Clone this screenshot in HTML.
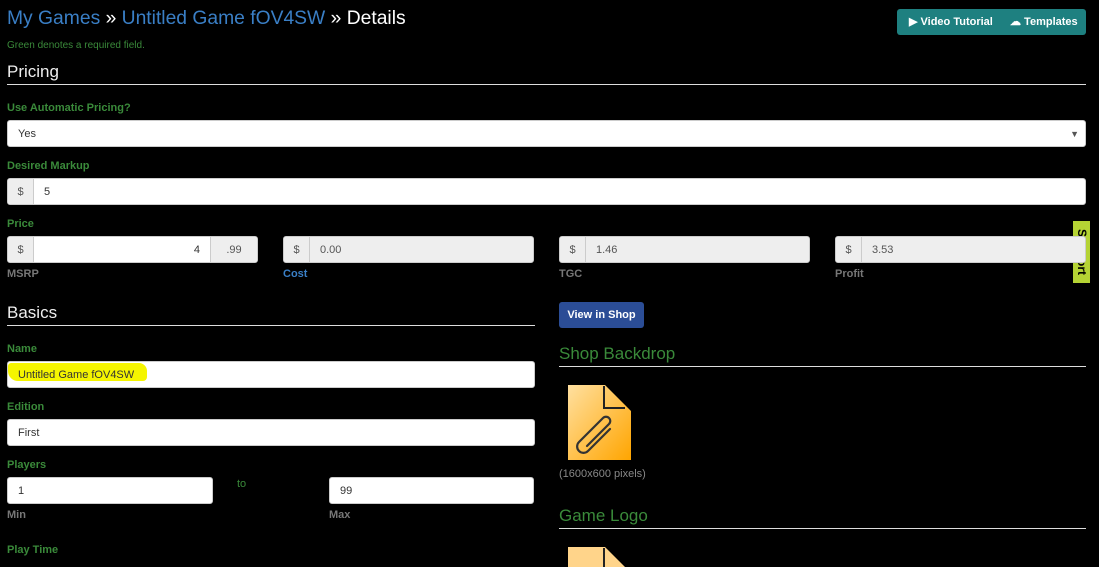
<!DOCTYPE html>
<html><head><meta charset="utf-8"><style>
*{box-sizing:border-box;margin:0;padding:0}
body{width:1099px;height:562px;background:#000;font-family:"Liberation Sans",Arial,sans-serif;position:relative;overflow:hidden}
.a{position:absolute}
.lbl{position:absolute;font-size:11px;font-weight:bold;color:#3a8a3a}
.sub{position:absolute;font-size:11px;font-weight:bold;color:#777}
.inp{position:absolute;background:#fff;border:1px solid #ccc;border-radius:3px;height:27px;font-size:11px;color:#333;padding:8px 10px;line-height:11px}
.grp{position:absolute;height:27px;display:flex;border-radius:3px;overflow:hidden;border:1px solid #ccc;font-size:11px;color:#555}
.ad{background:#eee;width:26px;text-align:center;line-height:26px;border-right:1px solid #ccc;flex:none}
.f{flex:1;line-height:26px;padding:0 10px}
.h{position:absolute;font-size:17px;color:#eee}
.line{position:absolute;height:1px;background:#ddd}
</style></head><body>
<div class="a" style="left:7px;top:8px;font-size:19.3px;color:#3a7fc6">My Games <span style="color:#fff">»</span> Untitled Game fOV4SW <span style="color:#fff">» Details</span></div>
<div class="a" style="left:7px;top:40px;font-size:10px;color:#3a8a3a">Green denotes a required field.</div>
<div class="a" style="left:897px;top:9px;width:189px;height:26px;background:#1e8080;border-radius:3px;color:#fff;font-size:11px;font-weight:bold;line-height:26px">
<span style="position:absolute;left:12px">▶ Video Tutorial</span><span style="position:absolute;left:113px">☁ Templates</span></div>
<div class="h" style="left:7px;top:62px">Pricing</div>
<div class="line" style="left:7px;top:84px;width:1079px"></div>
<div class="lbl" style="top:102px;left:7px">Use Automatic Pricing?</div>
<div class="inp" style="left:7px;top:120px;width:1079px">Yes<span style="position:absolute;right:6px;top:8px;font-size:9px;color:#555">▼</span></div>
<div class="lbl" style="top:160px;left:7px">Desired Markup</div>
<div class="grp" style="left:7px;top:178px;width:1079px;background:#fff"><div class="ad">$</div><div class="f" style="color:#333">5</div></div>
<div class="lbl" style="top:218px;left:7px">Price</div>
<div class="grp" style="left:7px;top:236px;width:251px;background:#fff"><div class="ad">$</div><div class="f" style="text-align:right;color:#333">4</div><div class="ad" style="width:47px;border-right:0;border-left:1px solid #ccc">.99</div></div>
<div class="grp" style="left:283px;top:236px;width:251px;background:#eee"><div class="ad">$</div><div class="f">0.00</div></div>
<div class="grp" style="left:559px;top:236px;width:251px;background:#eee"><div class="ad">$</div><div class="f">1.46</div></div>
<div class="a" style="left:1073px;top:221px;width:17px;height:62px;background:#b5d334"><div style="position:absolute;left:-15px;top:24px;width:48px;transform:rotate(90deg);font-size:12px;font-weight:bold;color:#000;text-align:center">Support</div></div>
<div class="grp" style="left:835px;top:236px;width:251px;background:#eee"><div class="ad">$</div><div class="f">3.53</div></div>
<div class="sub" style="left:7px;top:268px">MSRP</div>
<div class="sub" style="left:283px;top:268px;color:#3a7fc6">Cost</div>
<div class="sub" style="left:559px;top:268px">TGC</div>
<div class="sub" style="left:835px;top:268px">Profit</div>
<div class="h" style="left:7px;top:303px">Basics</div>
<div class="line" style="left:7px;top:325px;width:528px"></div>
<div class="a" style="left:559px;top:302px;width:85px;height:26px;background:#2b4d96;border-radius:3px;color:#fff;font-size:11px;font-weight:bold;text-align:center;line-height:26px">View in Shop</div>
<div class="lbl" style="top:343px;left:7px">Name</div>
<div class="inp" style="left:7px;top:361px;width:528px"><span style="position:absolute;left:0;top:1px;width:139px;height:18px;background:#f5f500;border-radius:3px 8px 4px 10px"></span><span style="position:relative">Untitled Game fOV4SW</span></div>
<div class="h" style="left:559px;top:344px;color:#3a8a3a">Shop Backdrop</div>
<div class="line" style="left:559px;top:366px;width:527px"></div>
<svg class="a" style="left:568px;top:385px" width="64" height="76" viewBox="0 0 64 76"><defs><linearGradient id="g" x1="0" y1="0" x2="1" y2="1"><stop offset="0" stop-color="#ffe0a0"/><stop offset="1" stop-color="#ffa500"/></linearGradient></defs><path d="M0 0H37L63 26V75H0Z" fill="url(#g)"/><path d="M36 1V23H57" fill="none" stroke="#222" stroke-width="2"/><path d="M42 44L20 66a6 6 0 0 1-9-9L35 33a4 4 0 0 1 6 6L19 61" fill="none" stroke="#333" stroke-width="2.2" stroke-linecap="round"/></svg>
<div class="a" style="left:559px;top:468px;font-size:11px;color:#888">(1600x600 pixels)</div>
<div class="lbl" style="top:401px;left:7px">Edition</div>
<div class="inp" style="left:7px;top:419px;width:528px">First</div>
<div class="lbl" style="top:459px;left:7px">Players</div>
<div class="inp" style="left:7px;top:477px;width:206px">1</div>
<div class="a" style="left:237px;top:478px;font-size:11px;color:#3a8a3a">to</div>
<div class="inp" style="left:329px;top:477px;width:205px">99</div>
<div class="sub" style="left:7px;top:509px">Min</div>
<div class="sub" style="left:329px;top:509px">Max</div>
<div class="lbl" style="top:544px;left:7px">Play Time</div>
<div class="h" style="left:559px;top:506px;color:#3a8a3a">Game Logo</div>
<div class="line" style="left:559px;top:528px;width:527px"></div>
<svg class="a" style="left:568px;top:547px" width="64" height="20" viewBox="0 0 64 20"><path d="M0 0H37L63 26V40H0Z" fill="#ffd48a"/><path d="M36 1V22" stroke="#222" stroke-width="2"/></svg>
</body></html>
